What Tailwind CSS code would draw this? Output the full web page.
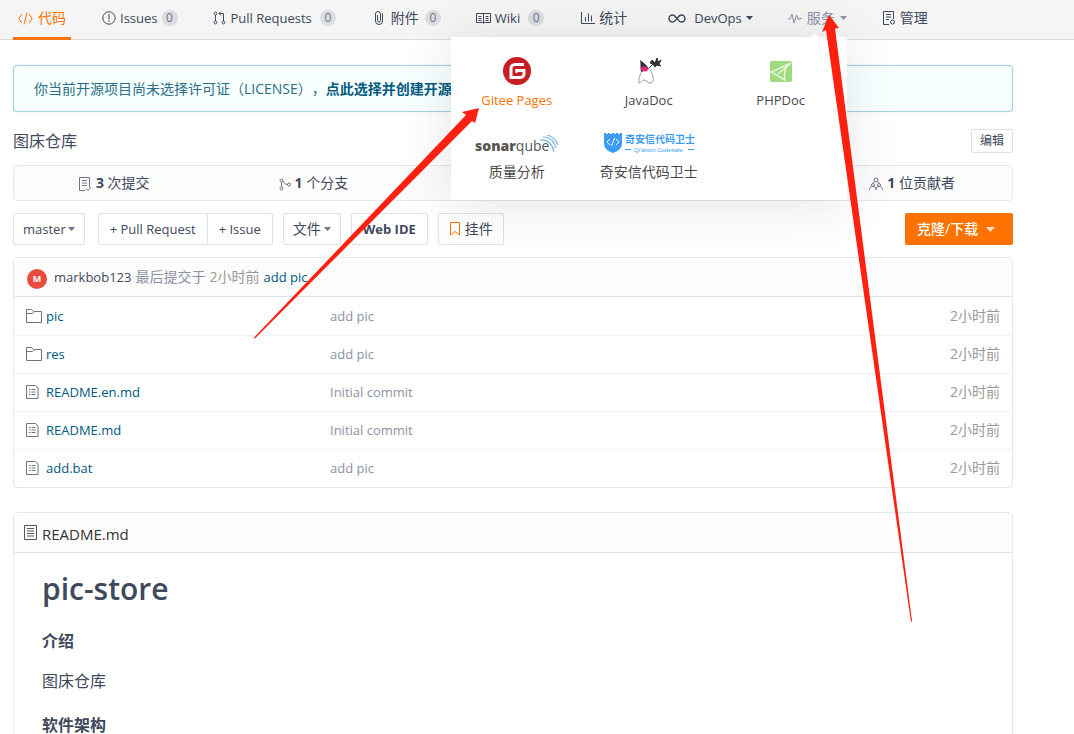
<!DOCTYPE html>
<html lang="zh-CN">
<head>
  <meta charset="UTF-8" />
  <meta name="viewport" content="width=device-width, initial-scale=1.0" />
  <title>pic-store</title>
  <script src="https://cdn.jsdelivr.net/npm/@tailwindcss/browser@4"></script>
  <style>
    body {
      font-family: "Open Sans", "Noto Sans CJK SC", sans-serif;
      text-spacing-trim: space-all;
    }
  </style>
</head>
<body class="relative h-screen overflow-hidden bg-white text-sm leading-5 text-[#40485b]">

  <!-- Project nav -->
  <nav class="h-10 bg-[#f5f5f5] border-b border-[#dcdddf] pl-[13px]">
    <ul class="flex h-10 gap-[27px] whitespace-nowrap">
      <li class="flex"><a href="#" class="flex items-center gap-[5px] px-[5px] pb-[1px] border-b-3 border-[#fe7300] text-[#fe7300]">
        <svg class="w-[15px] h-[15px]" viewBox="0 0 15 15" fill="none" stroke="currentColor"><path d="M4 3 .8 7.5 4 12M11 3l3.200 4.500L11 12M9 1.500 6 13.500"/></svg>代码</a></li>
      <li class="flex"><a href="#" class="flex items-center gap-1 px-1 pb-1">
        <svg class="w-[14px] h-[14px]" viewBox="0 0 14 14" fill="none" stroke="currentColor"><circle cx="7" cy="7" r="6.2"/><path d="M7 3v5.500M7 9.500v1.500"/></svg><span class="text-[13px]">Issues</span>
        <span class="w-4 h-4 rounded-full bg-[#dcdddf] text-[#6b7490] text-xs leading-4 text-center">0</span></a></li>
      <li class="flex"><a href="#" class="flex items-center gap-1 px-1 pb-1">
        <svg class="w-[14px] h-[14px]" viewBox="0 0 14 14" fill="none" stroke="currentColor"><circle cx="2.5" cy="2.5" r="1.4"/><circle cx="2.5" cy="11.5" r="1.4"/><circle cx="10.5" cy="11.5" r="1.4"/><path d="M2.500 4v6M10.500 10V2.500H6M8 .5l-2 2 2 2"/></svg><span class="text-[13px]">Pull Requests</span>
        <span class="ml-1 w-4 h-4 rounded-full bg-[#dcdddf] text-[#6b7490] text-xs leading-4 text-center">0</span></a></li>
      <li class="flex"><a href="#" class="flex items-center gap-1 px-1 pb-1">
        <svg class="w-4 h-4" viewBox="0 0 16 16" fill="none" stroke="currentColor"><path d="M6.500 5v5.500a1.500 1.500 0 0 0 3 0V4a2.500 2.500 0 0 0-5 0v7a3.500 3.500 0 0 0 7 0V3.500"/></svg>附件
        <span class="ml-[2px] w-4 h-4 rounded-full bg-[#dcdddf] text-[#6b7490] text-xs leading-4 text-center">0</span></a></li>
      <li class="flex"><a href="#" class="flex items-center gap-1 px-1 pb-1">
        <svg class="w-[15px] h-3" viewBox="0 0 15 12" fill="none" stroke="currentColor"><path d="M.5 1.500h14v9H8.500l-1 1-1-1H.5zM7.500 1.500v9.500M2.500 4.500h3M2.500 6.500h3M2.500 8.500h3M9.500 4.500h3M9.500 6.500h3M9.500 8.500h3"/></svg><span class="text-[13px]">Wiki</span>
        <span class="ml-1 w-4 h-4 rounded-full bg-[#dcdddf] text-[#6b7490] text-xs leading-4 text-center">0</span></a></li>
      <li class="flex"><a href="#" class="flex items-center gap-1 px-[6px] pb-1">
        <svg class="w-[14px] h-3" viewBox="0 0 14 12" fill="none" stroke="currentColor"><path d="M.5 0v11.500H14M4.500 9.500V5M7.500 9.500V1.500M10.500 9.500V3.500"/></svg>统计</a></li>
      <li class="flex"><button type="button" class="flex items-center gap-2 pl-2 pr-1 pb-1">
        <svg class="w-[18px] h-[9px]" viewBox="0 0 18 9" fill="none" stroke="currentColor" stroke-width="1.5"><path d="M9 4.500C7.500 2.500 6.500 1 4.500 1a3.500 3.500 0 0 0 0 7C6.500 8 7.500 6.500 9 4.500S11.500 1 13.500 1a3.500 3.500 0 0 1 0 7C11.500 8 10.500 6.500 9 4.500z"/></svg>
        <span class="flex items-center gap-1 text-[13px]">DevOps <svg class="w-[7px] h-1" viewBox="0 0 7 4" fill="currentColor"><path d="M0 0h7L3.500 4z"/></svg></span></button></li>
      <li class="relative flex"><button type="button" class="flex items-center gap-[5px] px-1 pb-1 text-[#8c92a4]">
        <svg class="w-[14px] h-3" viewBox="0 0 14 12" fill="none" stroke="currentColor"><path d="M0 7h2l2-5 2 9L8.500 3l2 5 1-1.500H14"/></svg>服务
        <svg class="w-[7px] h-1" viewBox="0 0 7 4" fill="currentColor"><path d="M0 0h7L3.500 4z"/></svg></button>
        <!-- Services menu -->
        <div class="absolute right-1 top-[37px] z-10 w-[396px] h-[163px] bg-white shadow-[0_4px_50px_rgba(27,31,60,0.12)] text-[13px] text-[#4a4a4a]">
          <svg class="absolute right-7 -top-1 w-2 h-1" viewBox="0 0 8 4" fill="#fff"><path d="M0 4h8L4 0z"/></svg>
          <div class="grid grid-cols-3 pt-[18px] text-center">
            <a href="#" class="flex flex-col items-center h-18 text-[#fe7300]">
              <svg class="w-8 h-8" viewBox="0 0 32 32"><circle cx="16" cy="16" r="14" fill="#c71d23"/><path d="M23 9.500h-9a4 4 0 0 0-4 4V22.500h9.500a3.500 3.500 0 0 0 3.500-3.500V15.500h-8.500" fill="none" stroke="#fff" stroke-width="3"/><path d="M15.500 14v4" stroke="#fff" stroke-width="2"/></svg>
              <span class="mt-[3px]">Gitee Pages</span></a>
            <a href="#" class="flex flex-col items-center h-18">
              <svg class="w-8 h-8" viewBox="0 0 32 32"><path d="M11 14C7 18 5 25 6 28c2 0 3-3 5-3s4 3 6 3c3 0 4-3 3-6-1-4-2-6-3-8" fill="#fff" stroke="#999"/><path d="M7 5c3 2 7 5 9 9l-8 3c-1-4 0-8-1-12z" fill="#333"/><ellipse cx="11.5" cy="14" rx="3.5" ry="2.5" fill="#e6287a"/><path d="m16 13 4-4M19 5l3 3 2-5 1 4 3-2-2 4 2 2-4-1-2 2-2-3-3-1z" fill="#333" stroke="#333"/></svg>
              <span class="mt-[3px]">JavaDoc</span></a>
            <a href="#" class="flex flex-col items-center h-18">
              <svg class="w-8 h-8" viewBox="0 0 32 32"><rect x="5" y="6" width="22" height="21" rx="2" fill="#a0d97e"/><path d="M26 8 6 17l14 8c-2-8 0-13 6-17L13 19" fill="none" stroke="#e8f7df" stroke-width="1.5"/></svg>
              <span class="mt-[3px]">PHPDoc</span></a>
            <a href="#" class="flex flex-col items-center h-18">
              <svg class="w-[84px] h-8" viewBox="0 0 84 32"><text x="0" y="24" font-family="Open Sans" font-size="14" font-weight="800" fill="#555">sonar<tspan font-weight="400">qube</tspan></text><g fill="none" stroke="#7db5dc" stroke-width="1.2"><path d="M65 13c8-1 13 5 14 12M68 10c7 0 12 5 13 11M72 8c5 1 9 5 11 10"/></g></svg>
              <span class="mt-[3px] text-sm">质量分析</span></a>
            <a href="#" class="flex flex-col items-center h-18">
              <svg class="w-[92px] h-8" viewBox="0 0 92 32" fill="#3c9df5"><path d="M1 6h2v1h2V6h2v1h2V6h2v1h2V6h2v1h2V6h2v10c0 6-4 8-9 10-5-2-9-4-9-10z"/><path d="m7 12-3 3 3 3M13 12l3 3-3 3M11.500 11l-3 8" fill="none" stroke="#fff"/><text x="22" y="16" font-family="Noto Sans CJK SC" font-size="10" font-weight="700">奇安信代码卫士</text><path d="M22 22h6v1h-6zM85 22h6v1h-6z"/><text x="31" y="25" font-family="Liberation Sans" font-size="6">Qi'anxin Codesafe</text></svg>
              <span class="mt-[3px] text-sm">奇安信代码卫士</span></a>
          </div>
        </div></li>
      <li class="flex"><a href="#" class="flex items-center gap-1 px-1 pb-1">
        <svg class="w-[14px] h-[14px]" viewBox="0 0 14 14" fill="none" stroke="currentColor"><path d="M7 13.500H1.500V.5h10V8M4 3.500h5M4 6h5M4 8.500h3"/><circle cx="10.5" cy="11" r="2"/></svg>管理</a></li>
    </ul>
  </nav>

  <main class="max-w-[1013px] pl-[13px]">
    <!-- License notice -->
    <div class="mt-[25px] h-[47px] flex items-center px-5 border border-[#a3d1de] rounded bg-[#f8ffff] text-[#276f86] shadow-[0_0_1px_#a3d1de] whitespace-nowrap">
      你当前开源项目尚未选择许可证（LICENSE），<a href="#" class="font-bold text-[#005980]">点此选择并创建开源许可</a>
    </div>

    <div class="mt-[17px] flex items-center justify-between">
      <p class="text-base leading-6">图床仓库</p>
      <button type="button" class="h-6 px-2 border border-[#dce3e8] rounded-xs bg-white text-xs">编辑</button>
    </div>

    <!-- Summary -->
    <div class="mt-3 h-9 grid grid-cols-5 items-center border border-[#e3e9ed] rounded bg-[#fcfcfd]">
      <a href="#" class="flex items-center justify-center gap-1">
        <svg class="w-[14px] h-[14px] mt-[2px]" viewBox="0 0 14 14" fill="none" stroke="#6b7386"><path d="M7 13.500H1.500V.5h10V10M4 3.500h5M4 6h5M4 8.500h5M8 11.500l2 2 3-3.500"/></svg>
        <span><b>3</b> 次提交</span></a>
      <a href="#" class="flex items-center justify-center gap-1">
        <svg class="w-3 h-[13px] mt-[2px]" viewBox="0 0 12 13" fill="none" stroke="#6b7386"><circle cx="2.5" cy="2.5" r="1.5"/><circle cx="2.5" cy="10.5" r="1.5"/><circle cx="10" cy="6.5" r="1.5"/><path d="M2.500 4v5M4 3c1 2 2 3.500 4.500 3.500"/></svg>
        <span><b>1</b> 个分支</span></a>
      <span></span>
      <span></span>
      <a href="#" class="flex items-center justify-center gap-1">
        <svg class="w-[14px] h-[14px] mt-[2px]" viewBox="0 0 14 14" fill="none" stroke="#6b7386"><circle cx="7" cy="3" r="2"/><circle cx="4" cy="8" r="1.5"/><circle cx="10" cy="8" r="1.5"/><path d="M.5 13c0-2 1-3.500 3.500-3.500S7 11 7 13c0-2 .5-3.500 3-3.500s3.500 1.500 3.500 3.500M5.500 4.500 4 6.500M8.500 4.500l1.500 2"/></svg>
        <span><b>1</b> 位贡献者</span></a>
    </div>

    <!-- Toolbar -->
    <div class="mt-3 flex items-center text-[13px] whitespace-nowrap">
      <button type="button" class="h-8 px-[9px] flex items-center gap-[2px] border border-[#dce3e8] rounded-xs">master <svg class="w-[7px] h-1" viewBox="0 0 7 4" fill="#6b7386"><path d="M0 0h7L3.500 4z"/></svg></button>
      <div class="ml-[13px] flex">
        <button type="button" class="h-8 px-[11px] border border-[#dce3e8] rounded-l-xs">+ Pull Request</button>
        <button type="button" class="h-8 px-[11px] border border-l-0 border-[#dce3e8] rounded-r-xs">+ Issue</button>
      </div>
      <button type="button" class="ml-[10px] h-8 px-[9px] flex items-center gap-[3px] border border-[#dce3e8] rounded-xs text-sm">文件 <svg class="w-[7px] h-1" viewBox="0 0 7 4" fill="#6b7386"><path d="M0 0h7L3.500 4z"/></svg></button>
      <button type="button" class="ml-[10px] h-8 px-[11px] border border-[#dce3e8] rounded-xs font-bold">Web IDE</button>
      <button type="button" class="ml-[10px] h-8 px-[10px] flex items-center gap-1 border border-[#dce3e8] rounded-xs text-sm">
        <svg class="w-3 h-[14px]" viewBox="0 0 12 14" fill="none" stroke="#fe7300"><path d="M1.500.5h9v12.500L6 9.500 1.500 13z"/></svg>挂件</button>
      <button type="button" class="ml-auto h-8 w-[108px] pl-3 flex items-center gap-2 rounded-xs bg-[#fe7300] text-white text-sm font-medium">克隆/下载 <svg class="w-[9px] h-[5px]" viewBox="0 0 9 5" fill="#ffdcc0"><path d="M0 0h9L4.500 5z"/></svg></button>
    </div>

    <!-- File list -->
    <div class="mt-3 border border-[#e3e9ed] rounded overflow-hidden text-[13px]">
      <div class="h-[39px] flex items-center gap-1 pl-[13px] border-b border-[#dce3e8] bg-[#fcfcfc] text-[#8c92a4]">
        <span class="mr-[3px] mt-1 w-5 h-5 rounded-full bg-[#e74c3c] text-white text-[9px] leading-5 font-bold text-center">M</span>
        <a href="#" class="text-[#40485b]">markbob123</a><span class="text-sm">最后提交于</span><span class="text-sm text-[#999]">2小时前</span><a href="#" class="text-[#005980]">add pic</a>
      </div>
      <table class="w-full table-fixed">
        <tbody id="files"></tbody>
      </table>
    </div>

    <!-- Readme -->
    <section class="mt-6 border border-[#e3e9ed] rounded">
      <div class="h-10 flex items-center gap-[5px] pl-[10px] border-b border-[#dce3e8] bg-[#fcfcfc]">
        <svg class="w-[13px] h-[15px]" viewBox="0 0 13 15" fill="none" stroke="#555"><path d="M.5.5h12v14H.5zM3 3.500h7M3 6h7M3 8.500h7M3 11h7"/></svg>
        <span class="mt-[2px] text-[15px] text-[#333]">README.md</span>
      </div>
      <article class="px-7 py-4 text-base leading-6">
        <h1 class="text-[30px] leading-10 font-semibold">pic-store</h1>
        <h3 class="mt-5 font-bold">介绍</h3>
        <p class="mt-4">图床仓库</p>
        <h3 class="mt-5 font-bold">软件架构</h3>
      </article>
    </section>
  </main>

  <!-- Arrows drawn over the page -->
  <svg class="absolute left-0 top-0 z-20 w-[1074px] h-[734px] pointer-events-none" viewBox="0 0 1074 734" fill="#ff2010">
    <path d="M253.500 338 466 115l-4-3 17-4-4 15-3-2L255 338.500z"/>
    <path d="m829 15 10 13-4 .5L912 621l-1 1L826 30l-4 2z"/>
  </svg>

  <script>
    const files = [
      { name: "pic", dir: true, message: "add pic" },
      { name: "res", dir: true, message: "add pic" },
      { name: "README.en.md", dir: false, message: "Initial commit" },
      { name: "README.md", dir: false, message: "Initial commit" },
      { name: "add.bat", dir: false, message: "add pic" }
    ];
    const folderIcon = `<svg class="w-4 h-[14px]" viewBox="0 0 16 14" fill="none" stroke="#6b7386"><path d="M.5 13.500V.5h5l2 2h8v11zM.5 4.500h6l2-2"/></svg>`;
    const fileIcon = `<svg class="w-[13px] h-[14px] mr-[3px]" viewBox="0 0 13 14" fill="none" stroke="#6b7386"><path d="M.5.5h9l2.500 2.500v10.500H.5zM3 4.500h1.500M5.500 4.500h4M3 7h1.500M5.500 7h4M3 9.500h1.500M5.500 9.500h4"/></svg>`;

    document.getElementById("files").innerHTML = files.map((f) => `
      <tr class="h-[38px] border-b border-[#eff2f6] last:border-b-0">
        <td class="w-[316px] pl-3"><a href="#" class="flex items-center gap-1 text-[#005980]">${f.dir ? folderIcon : fileIcon}${f.name}</a></td>
        <td class="text-[#8c92a4]">${f.message}</td>
        <td class="w-[100px] pr-3 text-right text-sm text-[#999]">2小时前</td>
      </tr>`).join("");
  </script>
</body>
</html>
